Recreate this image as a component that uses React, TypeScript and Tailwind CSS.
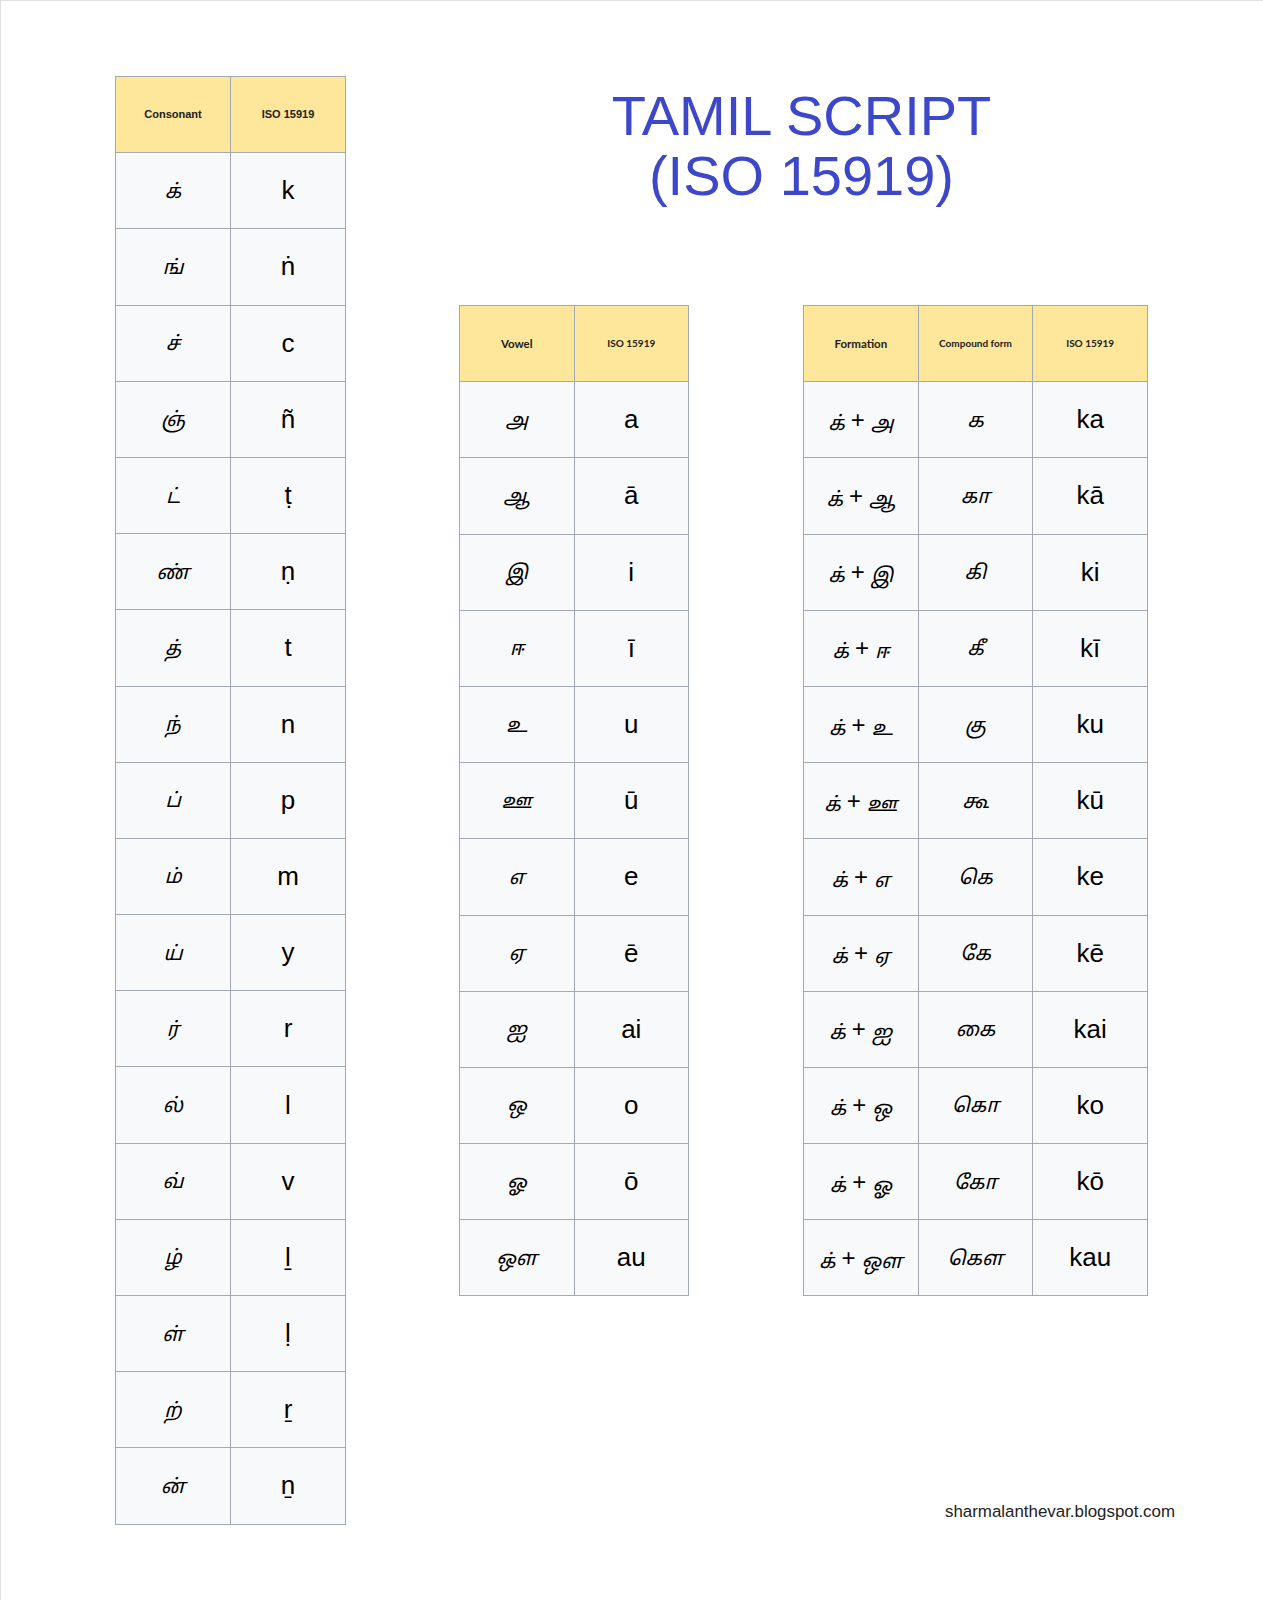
import React from 'react'

const consonants: [string, string][] = [
  ['க்', 'k'],
  ['ங்', 'ṅ'],
  ['ச்', 'c'],
  ['ஞ்', 'ñ'],
  ['ட்', 'ṭ'],
  ['ண்', 'ṇ'],
  ['த்', 't'],
  ['ந்', 'n'],
  ['ப்', 'p'],
  ['ம்', 'm'],
  ['ய்', 'y'],
  ['ர்', 'r'],
  ['ல்', 'l'],
  ['வ்', 'v'],
  ['ழ்', 'ḻ'],
  ['ள்', 'ḷ'],
  ['ற்', 'ṟ'],
  ['ன்', 'ṉ'],
]

const vowels: [string, string, string, string][] = [
  ['அ', 'a', 'க', 'ka'],
  ['ஆ', 'ā', 'கா', 'kā'],
  ['இ', 'i', 'கி', 'ki'],
  ['ஈ', 'ī', 'கீ', 'kī'],
  ['உ', 'u', 'கு', 'ku'],
  ['ஊ', 'ū', 'கூ', 'kū'],
  ['எ', 'e', 'கெ', 'ke'],
  ['ஏ', 'ē', 'கே', 'kē'],
  ['ஐ', 'ai', 'கை', 'kai'],
  ['ஒ', 'o', 'கொ', 'ko'],
  ['ஓ', 'ō', 'கோ', 'kō'],
  ['ஔ', 'au', 'கௌ', 'kau'],
]

const tamil = 'inline-block translate-y-[2px] font-["Latha","Noto_Sans_Tamil","Noto_Serif_Tamil","Lohit_Tamil",sans-serif] text-[20px] italic text-black'
const latin = 'font-["Liberation_Sans",Arial,sans-serif] text-[26px] text-black'
const cell = 'h-[76.2px] border border-[#a2a9b1] bg-[#f8f9fa] text-center align-middle p-0'
const head = 'h-[76.2px] border border-[#a2a9b1] bg-[#fee69b] text-center align-middle p-0 font-bold text-[#202122]'

export default function App() {
  return (
    <div className="min-h-[1600px] w-[1263px] border-t border-l border-[#e0e0e0] bg-white">
      <div className="flex pl-[114px] pt-[75px]">
        {/* Consonants */}
        <table className="border-collapse w-[231px] table-fixed self-start">
          <thead>
            <tr>
              <th className={`${head} font-["Liberation_Sans",Arial,sans-serif] text-[11px]`}>Consonant</th>
              <th className={`${head} font-["Liberation_Sans",Arial,sans-serif] text-[11px]`}>ISO 15919</th>
            </tr>
          </thead>
          <tbody>
            {consonants.map(([t, iso]) => (
              <tr key={t}>
                <td className={cell}>
                  <span className={tamil}>{t}</span>
                </td>
                <td className={cell}>
                  <span className={latin}>{iso}</span>
                </td>
              </tr>
            ))}
          </tbody>
        </table>

        <div className="ml-[113px] flex flex-col">
          {/* Title */}
          <h1 className="mt-[10px] w-[685px] text-center font-['Liberation_Sans',Arial,sans-serif] text-[56px] leading-[60px] text-[#3d47c9]">
            TAMIL SCRIPT
            <br />
            (ISO 15919)
          </h1>

          <div className="mt-[99px] flex gap-[114px]">
            {/* Vowels */}
            <table className="border-collapse w-[230px] table-fixed self-start">
              <thead>
                <tr>
                  <th className={`${head} font-["Lato","Open_Sans",sans-serif] text-[11.5px]`}>Vowel</th>
                  <th className={`${head} font-["Lato","Open_Sans",sans-serif] text-[10px]`}>ISO 15919</th>
                </tr>
              </thead>
              <tbody>
                {vowels.map(([v, iso]) => (
                  <tr key={v}>
                    <td className={cell}>
                      <span className={tamil}>{v}</span>
                    </td>
                    <td className={cell}>
                      <span className={latin}>{iso}</span>
                    </td>
                  </tr>
                ))}
              </tbody>
            </table>

            {/* Formation */}
            <table className="border-collapse w-[345px] table-fixed self-start">
              <thead>
                <tr>
                  <th className={`${head} font-["Lato","Open_Sans",sans-serif] text-[11.5px]`}>Formation</th>
                  <th className={`${head} font-["Lato","Open_Sans",sans-serif] text-[10px]`}>Compound form</th>
                  <th className={`${head} font-["Lato","Open_Sans",sans-serif] text-[10px]`}>ISO 15919</th>
                </tr>
              </thead>
              <tbody>
                {vowels.map(([v, , comp, iso]) => (
                  <tr key={v}>
                    <td className={cell}>
                      <span className={tamil}>க்</span>
                      <span className="mx-[6px] font-['Liberation_Sans',Arial,sans-serif] text-[24px] text-black">+</span>
                      <span className={tamil}>{v}</span>
                    </td>
                    <td className={cell}>
                      <span className={tamil}>{comp}</span>
                    </td>
                    <td className={cell}>
                      <span className={latin}>{iso}</span>
                    </td>
                  </tr>
                ))}
              </tbody>
            </table>
          </div>

          <p className="ml-[486px] mt-[206px] whitespace-nowrap font-['Liberation_Sans',Arial,sans-serif] text-[16.9px] leading-[20px] text-[#222]">
            sharmalanthevar.blogspot.com
          </p>
        </div>
      </div>
    </div>
  )
}
